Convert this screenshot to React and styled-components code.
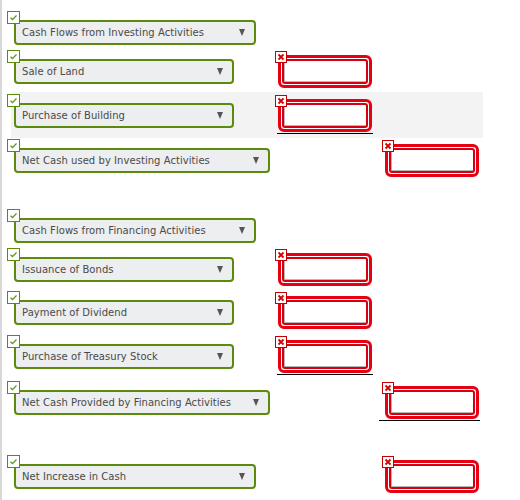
import React from "react";
import styled, { createGlobalStyle } from "styled-components";

const GlobalStyle = createGlobalStyle`
  html, body {
    margin: 0;
    padding: 0;
    background: #ffffff;
  }
  body {
    font-family: "DejaVu Sans", Verdana, sans-serif;
  }
`;

const Page = styled.div`
  min-height: 500px;
  box-sizing: border-box;
  border-left: 2px solid #d8d8d8;
  padding-top: 16px;
`;

const Row = styled.div`
  display: grid;
  grid-template-columns: 264px 107px 94px;
  align-items: center;
  width: 469px;
  margin-left: 9px;
  padding-left: 3px;
  margin-top: ${(p) => p.$gap || 0}px;
  height: 33px;
  background: ${(p) => (p.$shaded ? "#f3f3f3" : "transparent")};
  padding-top: ${(p) => (p.$shaded ? 7 : 0)}px;
  padding-bottom: ${(p) => (p.$shaded ? 6 : 0)}px;
`;

const Cell = styled.div`
  position: relative;
  display: flex;
  align-items: center;
`;

const Select = styled.div`
  position: relative;
  display: flex;
  align-items: center;
  justify-content: space-between;
  box-sizing: border-box;
  width: ${(p) => p.$width}px;
  height: 25px;
  padding: 0 9px 0 6px;
  border: 2px solid #5b8a0c;
  border-radius: 4px;
  background: #eceeef;
  color: #4a4a4a;
  font-size: 10px;
  letter-spacing: 0.05px;
`;

const Arrow = styled.span`
  width: 0;
  height: 0;
  border-left: 3.5px solid transparent;
  border-right: 3.5px solid transparent;
  border-top: 7px solid #555555;
`;

const CheckBadge = styled.div`
  position: absolute;
  left: -7px;
  top: -9px;
  width: 13px;
  height: 13px;
  box-sizing: border-box;
  border: 1px solid #5b8a0c;
  background: #ffffff;
  display: flex;
  align-items: center;
  justify-content: center;
  z-index: 1;
`;

const CrossBadge = styled.div`
  position: absolute;
  left: -6px;
  top: -7px;
  width: 12px;
  height: 12px;
  box-sizing: border-box;
  border: 1px solid #c40000;
  background: #ffffff;
  display: flex;
  align-items: center;
  justify-content: center;
  z-index: 1;
`;

const Underline = styled.div`
  position: relative;
  border-bottom: 1px solid #000000;
  padding-left: ${(p) => p.$indent}px;
  padding-right: 1px;
  padding-bottom: 1px;
  margin-left: ${(p) => -p.$indent}px;
  margin-bottom: -2px;
`;

const AnswerBox = styled.div`
  position: relative;
  width: 94px;
  height: 33px;
  box-sizing: border-box;
  border: 3px solid #e60012;
  border-radius: 6px;
  padding: 1px;
  background: #ffffff;
`;

const AnswerInner = styled.div`
  height: 100%;
  box-sizing: border-box;
  border: 2px solid #d4000f;
  border-radius: 3px;
  background: #ffffff;
  box-shadow: inset 1px -1px 0 #b8b8b8;
`;

const Check = () => (
  <CheckBadge>
    <svg width="9" height="7" viewBox="0 0 9 7">
      <polyline
        points="1.5,3.8 3.5,5.6 7.5,1.5"
        fill="none"
        stroke="#5b9a1c"
        strokeWidth="1.3"
      />
    </svg>
  </CheckBadge>
);

const Cross = () => (
  <CrossBadge>
    <svg width="8" height="8" viewBox="0 0 8 8">
      <path
        d="M1.5 1.5 L6.5 6.5 M6.5 1.5 L1.5 6.5"
        stroke="#d40000"
        strokeWidth="1.8"
      />
    </svg>
  </CrossBadge>
);

const Dropdown = ({ label, width }) => (
  <Cell>
    <Check />
    <Select $width={width}>
      <span>{label}</span>
      <Arrow />
    </Select>
  </Cell>
);

const Answer = () => (
  <AnswerBox>
    <Cross />
    <AnswerInner />
  </AnswerBox>
);

const AnswerCell = ({ underline, indent }) => (
  <Cell>
    {underline ? (
      <Underline $indent={indent}>
        <Answer />
      </Underline>
    ) : (
      <Answer />
    )}
  </Cell>
);

const rows = [
  { label: "Cash Flows from Investing Activities", width: 242, gap: 0 },
  { label: "Sale of Land", width: 220, gap: 6, col: 1 },
  { label: "Purchase of Building", width: 220, gap: 4, col: 1, shaded: true, underline: true, indent: 1 },
  { label: "Net Cash used by Investing Activities", width: 256, gap: 6, col: 2 },
  { label: "Cash Flows from Financing Activities", width: 242, gap: 37 },
  { label: "Issuance of Bonds", width: 220, gap: 6, col: 1 },
  { label: "Payment of Dividend", width: 220, gap: 10, col: 1 },
  { label: "Purchase of Treasury Stock", width: 220, gap: 11, col: 1, underline: true, indent: 1 },
  { label: "Net Cash Provided by Financing Activities", width: 256, gap: 13, col: 2, underline: true, indent: 6 },
  { label: "Net Increase in Cash", width: 242, gap: 41, col: 2 },
];

export default function App() {
  return (
    <>
      <GlobalStyle />
      <Page>
        {rows.map((r) => (
          <Row key={r.label} $gap={r.gap} $shaded={r.shaded}>
            <Dropdown label={r.label} width={r.width} />
            {r.col === 1 ? (
              <AnswerCell underline={r.underline} indent={r.indent} />
            ) : (
              <div />
            )}
            {r.col === 2 ? (
              <AnswerCell underline={r.underline} indent={r.indent} />
            ) : (
              <div />
            )}
          </Row>
        ))}
      </Page>
    </>
  );
}
